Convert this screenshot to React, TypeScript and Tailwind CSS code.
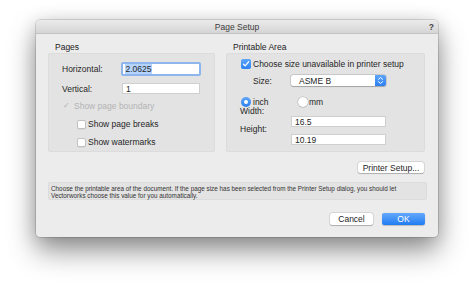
import React from "react";

const font = { fontFamily: '"Liberation Sans", Arial, sans-serif' };

function Checkbox() {
  return <div className="w-[9px] h-[9px] bg-white border border-[#c2c2c2] rounded-[2px] shrink-0 shadow-[0_0.5px_0.5px_rgba(0,0,0,0.1)]" />;
}

export default function App() {
  return (
    <div className="w-[474px] h-[289px] bg-white overflow-hidden pt-[20px]" style={font}>
      <div className="ml-[36px] w-[402px] h-[217px] bg-[#ececec] rounded-[4px] shadow-[0_14px_28px_rgba(0,0,0,0.42),0_2px_18px_rgba(0,0,0,0.14),0_0_0_0.5px_rgba(0,0,0,0.25)] flex flex-col text-[#262626] text-[8.5px] leading-[10px]">
        {/* title bar */}
        <div className="h-[14px] shrink-0 relative flex items-center justify-center bg-gradient-to-b from-[#ebebeb] to-[#d5d5d5] border-b border-[#c3c3c3] rounded-t-[4px]">
          <span className="text-[#3c3c3c]">Page Setup</span>
          <span className="absolute right-[4px] top-[2px] font-bold text-[#444]">?</span>
        </div>

        <div className="flex flex-col pl-[12px] pr-[13px]">
          <div className="flex gap-[11px] pt-[8px]">
            {/* Pages */}
            <div className="w-[167px]">
              <div className="h-[10px] pl-[7px] mb-[1px] text-[#222]">Pages</div>
              <div className="h-[99px] bg-[#e3e3e3] border border-[#dcdcdc] rounded-[2px] pt-[8px] pl-[13px] flex flex-col">
                <div className="h-[14px] flex items-center">
                  <span className="w-[59px]">Horizontal:</span>
                  <div className="w-[80px] h-[14px] border-2 border-[#8fb6ec] rounded-[2px] bg-white flex items-center pl-[2px]">
                    <span className="bg-[#b4d4fd] px-[0.5px]">2.0625</span>
                  </div>
                </div>
                <div className="h-[11px] mt-[7px] flex items-center">
                  <span className="w-[60px]">Vertical:</span>
                  <div className="w-[78px] h-[11px] border border-[#cfcfcf] bg-white flex items-center pl-[3px]">1</div>
                </div>
                <div className="h-[12px] mt-[6px] flex items-center pl-[1px] text-[#b3b3b3]">
                  <span className="w-[11px] text-[8px]">✓</span>
                  <span>Show page boundary</span>
                </div>
                <div className="h-[12px] mt-[6px] flex items-center pl-[15px] gap-[2px]">
                  <Checkbox />
                  <span>Show page breaks</span>
                </div>
                <div className="h-[12px] mt-[6px] flex items-center pl-[15px] gap-[2px]">
                  <Checkbox />
                  <span>Show watermarks</span>
                </div>
              </div>
            </div>

            {/* Printable Area */}
            <div className="w-[199px]">
              <div className="h-[10px] pl-[7px] mb-[1px] text-[#222]">Printable Area</div>
              <div className="h-[99px] bg-[#e3e3e3] border border-[#dcdcdc] rounded-[2px] pt-[4px] pl-[14px] flex flex-col">
                <div className="h-[12px] flex items-center gap-[2px]">
                  <div className="w-[10px] h-[10px] rounded-[2px] bg-gradient-to-b from-[#5ea6f9] to-[#2b7ff2] flex items-center justify-center shrink-0">
                    <svg width="8" height="8" viewBox="0 0 8 8"><path d="M1.5 4.2 L3.2 5.9 L6.6 1.8" stroke="white" strokeWidth="1.3" fill="none" strokeLinecap="round" strokeLinejoin="round" /></svg>
                  </div>
                  <span>Choose size unavailable in printer setup</span>
                </div>
                <div className="h-[11px] mt-[5px] flex items-center pl-[12px]">
                  <span className="w-[38px]">Size:</span>
                  <div className="w-[95px] h-[11px] bg-white rounded-[2px] shadow-[0_0_0_0.5px_rgba(0,0,0,0.2),0_0.5px_1px_rgba(0,0,0,0.2)] flex items-center justify-between pl-[8px]">
                    <span>ASME B</span>
                    <div className="w-[11px] h-[11px] rounded-r-[2px] bg-gradient-to-b from-[#5ea6f9] to-[#2b7ff2] flex items-center justify-center">
                      <svg width="7" height="9" viewBox="0 0 7 9"><path d="M1.5 3.3 L3.5 1.5 L5.5 3.3 M1.5 5.7 L3.5 7.5 L5.5 5.7" stroke="white" strokeWidth="1" fill="none" strokeLinecap="round" strokeLinejoin="round" /></svg>
                    </div>
                  </div>
                </div>
                <div className="h-[12px] mt-[10px] flex items-center">
                  <div className="w-[57px] flex items-center gap-[2px]">
                    <div className="w-[10px] h-[10px] rounded-full bg-gradient-to-b from-[#5ea6f9] to-[#2b7ff2] flex items-center justify-center shrink-0">
                      <div className="w-[4px] h-[4px] rounded-full bg-white" />
                    </div>
                    <span>inch</span>
                  </div>
                  <div className="flex items-center gap-[1px]">
                    <div className="w-[10px] h-[10px] rounded-full bg-white shadow-[0_0_0_0.5px_rgba(0,0,0,0.25)] shrink-0" />
                    <span>mm</span>
                  </div>
                </div>
                <div className="h-[11px] mt-[8px] flex items-center -ml-[1px]">
                  <span className="w-[51px] -mt-[22px]">Width:</span>
                  <div className="w-[95px] h-[11px] border border-[#cfcfcf] bg-white flex items-center pl-[3px]">16.5</div>
                </div>
                <div className="h-[11px] mt-[7px] flex items-center -ml-[1px]">
                  <span className="w-[51px] -mt-[22px]">Height:</span>
                  <div className="w-[95px] h-[11px] border border-[#cfcfcf] bg-white flex items-center pl-[3px]">10.19</div>
                </div>
              </div>
            </div>
          </div>

          <div className="flex justify-end mt-[10px] pr-[1px]">
            <div className="w-[66px] h-[11px] bg-white rounded-[2px] shadow-[0_0_0_0.5px_rgba(0,0,0,0.15),0_0.5px_1px_rgba(0,0,0,0.2)] flex items-center justify-center">Printer Setup...</div>
          </div>

          <div className="mt-[9px] w-[379px] h-[18px] bg-[#e3e3e3] border border-[#dcdcdc] rounded-[2px] pl-[2px] pt-[2px] text-[6.35px] leading-[7px] text-[#333]">
            <div className="whitespace-nowrap">Choose the printable area of the document. If the page size has been selected from the Printer Setup dialog, you should let</div>
            <div className="whitespace-nowrap">Vectorworks choose this value for you automatically.</div>
          </div>

          <div className="flex justify-end gap-[9px] mt-[13px]">
            <div className="w-[43px] h-[12px] bg-white rounded-[2px] shadow-[0_0_0_0.5px_rgba(0,0,0,0.15),0_0.5px_1px_rgba(0,0,0,0.2)] flex items-center justify-center">Cancel</div>
            <div className="w-[43px] h-[12px] rounded-[2px] bg-gradient-to-b from-[#62a8fa] to-[#1e7cf2] text-white flex items-center justify-center shadow-[0_0.5px_1px_rgba(0,0,0,0.2)]">OK</div>
          </div>
        </div>
      </div>
    </div>
  );
}
